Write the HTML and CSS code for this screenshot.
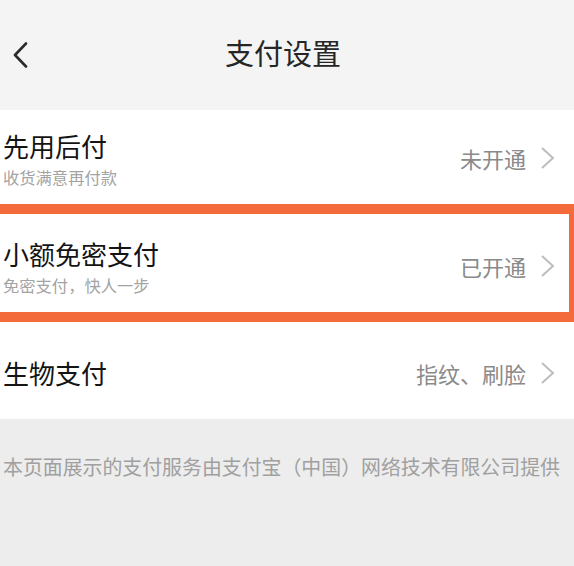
FILE: index.html
```html
<!DOCTYPE html>
<html lang="zh-CN">
<head>
<meta charset="utf-8">
<title>支付设置</title>
<link rel="stylesheet" href="styles.css">
</head>
<body>
<div class="page">
  <header class="nav">
    <svg class="back" width="16" height="28" viewBox="0 0 16 28"><polyline points="13,1.5 2,13 13,24.5" fill="none" stroke="#2b2b2b" stroke-width="2.6" stroke-linecap="round" stroke-linejoin="round"/></svg>
    <h1 class="title">支付设置</h1>
  </header>
  <section class="list">
    <div class="row row-1">
      <div class="left">
        <div class="name">先用后付</div>
        <div class="desc">收货满意再付款</div>
      </div>
      <div class="right">
        <span class="value">未开通</span>
        <svg class="chev" width="15" height="24" viewBox="0 0 15 24"><polyline points="2,2 13,12 2,22" fill="none" stroke="#bdbdbd" stroke-width="2"/></svg>
      </div>
    </div>
    <div class="row row-2">
      <div class="left">
        <div class="name">小额免密支付</div>
        <div class="desc">免密支付，快人一步</div>
      </div>
      <div class="right">
        <span class="value">已开通</span>
        <svg class="chev" width="15" height="24" viewBox="0 0 15 24"><polyline points="2,2 13,12 2,22" fill="none" stroke="#bdbdbd" stroke-width="2"/></svg>
      </div>
    </div>
    <div class="row row-3">
      <div class="left">
        <div class="name">生物支付</div>
      </div>
      <div class="right">
        <span class="value">指纹、刷脸</span>
        <svg class="chev" width="15" height="24" viewBox="0 0 15 24"><polyline points="2,2 13,12 2,22" fill="none" stroke="#bdbdbd" stroke-width="2"/></svg>
      </div>
    </div>
    <div class="highlight"></div>
  </section>
  <footer class="foot">本页面展示的支付服务由支付宝（中国）网络技术有限公司提供</footer>
</div>
</body>
</html>
```

FILE: styles.css
```css
* { box-sizing: border-box; margin: 0; padding: 0; }
html, body { width: 574px; height: 566px; overflow: hidden; }
body {
  font-family: "Noto Sans CJK SC", "Noto Sans", sans-serif;
  background: #ededed;
}
.page { position: relative; width: 574px; height: 566px; }
.nav {
  height: 110px;
  background: #f4f4f4;
  display: flex;
  align-items: center;
  position: relative;
  padding-left: 13px;
}
.back { display: block; margin-top: 2px; }
.title {
  position: absolute;
  left: 0; right: 8px;
  top: 33px;
  text-align: center;
  font-size: 29px;
  line-height: 38px;
  font-weight: 400;
  color: #262626;
}
.list { background: #fff; position: relative; }
.row {
  display: flex;
  align-items: center;
  justify-content: space-between;
  padding: 0 19px 0 3px;
}
.row-1 { height: 96px; }
.row-2 { height: 120px; }
.row-3 { height: 93px; }
.left { display: flex; flex-direction: column; gap: 6px; }
.name {
  font-size: 26px;
  line-height: 30px;
  color: #141414;
}
.desc {
  font-size: 16.3px;
  line-height: 20px;
  color: #a3a3a3;
}
.row-1 .left { margin-top: 2px; }
.row-2 .left { margin-top: 2px; }
.right { display: flex; align-items: center; gap: 14px; }
.value {
  font-size: 22px;
  line-height: 28px;
  color: #8a8a8a;
}
.chev { display: block; }
.highlight {
  position: absolute;
  left: 0; right: 0;
  top: 94px;
  height: 118px;
  border-style: solid;
  border-color: #f36b3b;
  border-width: 10px 5px 10px 0;
}
.foot {
  padding-top: 34px;
  font-size: 19.9px;
  line-height: 28px;
  color: #a0a0a0;
  padding-left: 3px;
  white-space: nowrap;
}
```
